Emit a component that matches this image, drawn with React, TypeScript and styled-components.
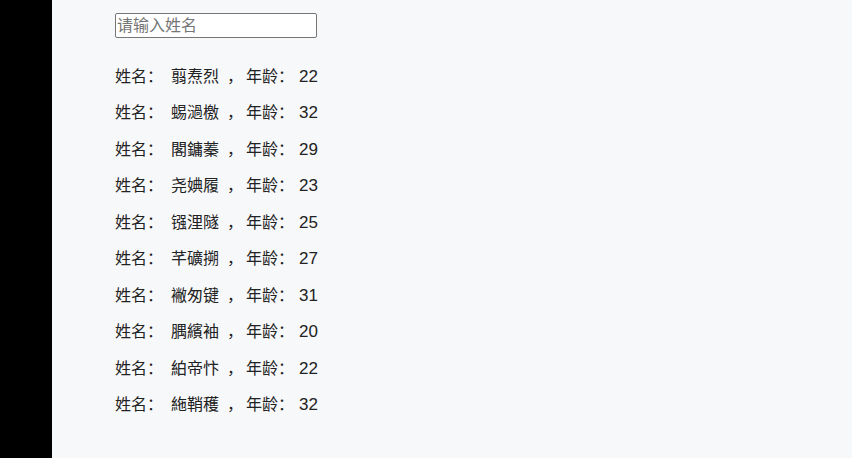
import React, { useState } from "react";
import styled, { createGlobalStyle } from "styled-components";

const Global = createGlobalStyle`
  html, body { margin: 0; padding: 0; height: 100%; }
  body { background: #f7f8fa; font-family: "Liberation Sans", "Noto Sans CJK SC", sans-serif; }
  #root { height: 100%; }
`;

const Page = styled.div`
  display: flex;
  width: 852px;
  height: 458px;
  background: #f7f8fa;
`;

const SideBar = styled.div`
  width: 52px;
  flex-shrink: 0;
  background: #000;
`;

const Main = styled.div`
  display: flex;
  flex-direction: column;
  padding: 13px 0 0 63px;
`;

const SearchInput = styled.input`
  box-sizing: border-box;
  width: 202px;
  height: 25px;
  border: 1px solid #767676;
  border-radius: 2px;
  background: #fff;
  padding: 0 1px;
  font-family: "Liberation Sans", "Noto Sans CJK SC", sans-serif;
  font-size: 16px;
  color: #222;
  outline: none;
  &::placeholder { color: #757575; }
`;

const List = styled.ul`
  list-style: none;
  margin: 29px 0 0;
  padding: 0;
  display: flex;
  flex-direction: column;
`;

const Row = styled.li`
  display: flex;
  align-items: baseline;
  height: 36.45px;
  line-height: 20px;
  font-size: 16px;
  color: #222;
  white-space: pre;
`;

const Part = styled.span<{ $gap: number }>`
  margin-left: ${(p) => p.$gap}px;
`;

const Age = styled.span`
  margin-left: 5px;
  font-size: 17px;
`;

const people = [
  { name: "翦焘烈", age: 22 },
  { name: "蜴濄檄", age: 32 },
  { name: "閣鏞蓁", age: 29 },
  { name: "尧婰履", age: 23 },
  { name: "镪浬隧", age: 25 },
  { name: "芊礦搠", age: 27 },
  { name: "襒匆键", age: 31 },
  { name: "腢繽袖", age: 20 },
  { name: "絈帝忭", age: 22 },
  { name: "絁鞘穫", age: 32 },
];

export default function App() {
  const [q, setQ] = useState("");
  const shown = people.filter((p) => p.name.includes(q));
  return (
    <Page>
      <Global />
      <SideBar />
      <Main>
        <SearchInput placeholder="请输入姓名" value={q} onChange={(e) => setQ(e.target.value)} />
        <List>
          {shown.map((p, i) => (
            <Row key={i}>
              <Part $gap={0}>姓名：</Part>
              <Part $gap={8}>{p.name}</Part>
              <Part $gap={8}>，</Part>
              <Part $gap={3}>年龄：</Part>
              <Age>{p.age}</Age>
            </Row>
          ))}
        </List>
      </Main>
    </Page>
  );
}
